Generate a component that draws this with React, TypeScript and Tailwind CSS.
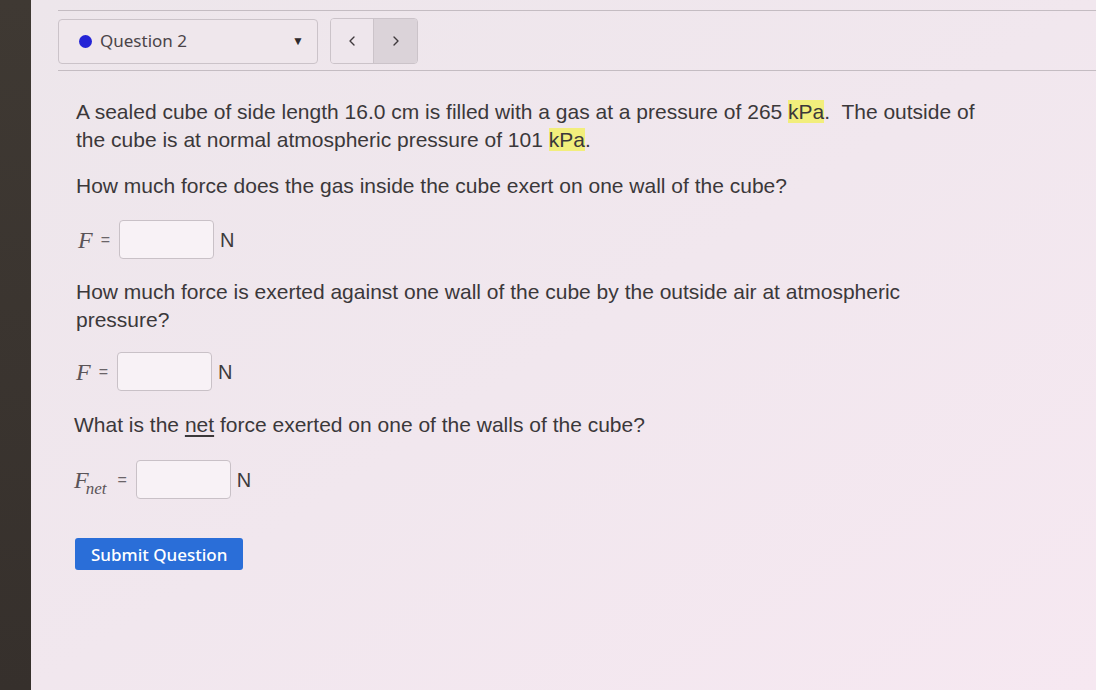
import { ChevronLeft, ChevronRight } from "lucide-react";

function Unit({ children }: { children: React.ReactNode }) {
  return <span className="bg-[#f2ee7c]">{children}</span>;
}

function AnswerRow({ label, sub }: { label: string; sub?: string }) {
  return (
    <div className="flex items-center h-[39px]">
      <span className="font-['Liberation_Serif',serif] italic text-[24px] text-[#5a5458] leading-none">
        {label}
        {sub && <span className="relative top-[6px] -ml-[3px] text-[17px]">{sub}</span>}
      </span>
      <span className={`text-[16px] text-[#6a6468] ${sub ? "ml-[11px]" : "ml-[8px]"}`}>=</span>
      <div className="ml-[9px] w-[95px] h-[39px] rounded-[4px] border border-[#c9c1c7] bg-[#f8f2f6]" />
      <span className="ml-[6px] text-[20px] text-[#3d3a3c]">N</span>
    </div>
  );
}

export default function App() {
  return (
    <div className="flex h-[690px] w-full font-['Liberation_Sans',Arial,sans-serif] overflow-hidden">
      <div className="w-[31px] shrink-0 bg-gradient-to-b from-[#3f3933] to-[#36302c]" />
      <div className="flex-1 bg-gradient-to-br from-[#ede6eb] via-[#f1e7ee] to-[#f6e8f1] pt-[10px]">
        <div className="ml-[27px] border-t border-[#c4bcc2]" />
        <div className="ml-[27px] flex items-center gap-[12px] pt-[7px]">
          <div className="w-[260px] h-[45px] rounded-[4px] border border-[#cbc3c9] bg-[#efe7ec] flex items-center pl-[20px] pr-[13px]">
            <span className="w-[13px] h-[13px] rounded-full bg-[#2424d6]" />
            <span className="ml-[8px] font-['Noto_Sans',sans-serif] text-[17px] text-[#4a4448]">Question 2</span>
            <span className="ml-auto text-[12px] text-[#2f2a2d]">▼</span>
          </div>
          <div className="w-[88px] h-[46px] rounded-[4px] border border-[#cbc3c9] flex overflow-hidden">
            <div className="w-1/2 flex items-center justify-center bg-[#eee6ec] border-r border-[#cbc3c9]">
              <ChevronLeft size={16} strokeWidth={2} className="text-[#3e393c]" />
            </div>
            <div className="w-1/2 flex items-center justify-center bg-[#dbd3d9]">
              <ChevronRight size={16} strokeWidth={2} className="text-[#3e393c]" />
            </div>
          </div>
        </div>
        <div className="ml-[27px] mt-[6px] border-t border-[#c4bcc2]" />

        <div className="pl-[45px] pt-[27px] text-[21px] leading-[28px] text-[#3b383a]">
          <p className="w-[912px]">
            A sealed cube of side length 16.0 cm is filled with a gas at a pressure of 265 <Unit>kPa</Unit>.&nbsp; The outside of
            the cube is at normal atmospheric pressure of 101 <Unit>kPa</Unit>.
          </p>
          <p className="mt-[18px]">How much force does the gas inside the cube exert on one wall of the cube?</p>
          <div className="mt-[20px] ml-[2px]">
            <AnswerRow label="F" />
          </div>
          <p className="mt-[19px] w-[880px]">
            How much force is exerted against one wall of the cube by the outside air at atmospheric pressure?
          </p>
          <div className="mt-[18px]">
            <AnswerRow label="F" />
          </div>
          <p className="mt-[20px] -ml-[2px]">
            What is the <span className="underline underline-offset-[3px]">net</span> force exerted on one of the walls of the cube?
          </p>
          <div className="mt-[21px] -ml-[2px]">
            <AnswerRow label="F" sub="net" />
          </div>
          <button className="mt-[39px] -ml-[1px] h-[32px] px-[16px] rounded-[3px] bg-[#2a6ed8] text-white font-['Noto_Sans',sans-serif] text-[17px] font-medium leading-none">
            Submit Question
          </button>
        </div>
      </div>
    </div>
  );
}
